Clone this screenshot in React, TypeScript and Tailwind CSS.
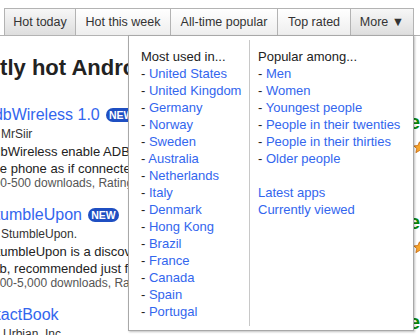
import React from 'react';

const tabs = [
  { label: 'Hot today', w: 'w-[72px]', active: true },
  { label: 'Hot this week', w: 'w-[95px]' },
  { label: 'All-time popular', w: 'w-[107px]' },
  { label: 'Top rated', w: 'w-[73px]' },
  { label: 'More ▼', w: 'w-[63px]', active: true },
];

const countries = [
  'United States', 'United Kingdom', 'Germany', 'Norway', 'Sweden', 'Australia', 'Netherlands',
  'Italy', 'Denmark', 'Hong Kong', 'Brazil', 'France', 'Canada', 'Spain', 'Portugal',
];

const groups = ['Men', 'Women', 'Youngest people', 'People in their twenties', 'People in their thirties', 'Older people'];

const apps = [
  {
    title: 'adbWireless 1.0', titleMl: 'ml-[-15px]', isNew: true,
    dev: 'MrSiir', devMl: 'ml-[1px]',
    lines: [
      { t: 'adbWireless enable ADB over WiFi to control', ml: 'ml-[-14px]' },
      { t: 'the phone as if connected by USB.', ml: 'ml-[-11px]' },
    ],
    dl: '100-500 downloads, Rating: 4.5', dlMl: 'ml-[-13px]',
  },
  {
    title: 'StumbleUpon', titleMl: 'ml-[-15px]', isNew: true,
    dev: 'StumbleUpon.', devMl: 'ml-[1px]',
    lines: [
      { t: 'StumbleUpon is a discovery engine that', ml: 'ml-[-12px]' },
      { t: 'web, recommended just for you.', ml: 'ml-[-17px]' },
    ],
    dl: '1,000-5,000 downloads, Rating: 4.2', dlMl: 'ml-[-17px]',
  },
  {
    title: 'ContactBook', titleMl: 'ml-[-33px]', isNew: false,
    dev: 'Urbian, Inc.', devMl: 'ml-[3px]',
    lines: [],
    dl: '', dlMl: '',
  },
];

function Star() {
  return (
    <svg width="13" height="13" viewBox="0 0 24 24">
      <path d="M12 1.5l3.1 6.9 7.4.7-5.6 5 1.7 7.4L12 17.6l-6.6 3.9 1.7-7.4-5.6-5 7.4-.7z" fill="#f6a52e" stroke="#c8690a" strokeWidth="1.5" strokeLinejoin="round" />
    </svg>
  );
}

export default function App() {
  return (
    <div className="relative w-[420px] h-[335px] overflow-hidden bg-white font-['Liberation_Sans',Arial,sans-serif] text-[#222]">
      {/* tab bar */}
      <div className="pt-[8px] pl-[4px] flex">
        {tabs.map((t, i) => (
          <div
            key={t.label}
            className={`${t.w} h-[27px] flex items-center justify-center border-t border-r border-[#b3b3b3] text-[12.5px] text-[#333] ${i === 0 ? 'border-l' : ''} ${
              t.active ? 'bg-gradient-to-b from-[#f7f7f7] to-[#dedede]' : 'bg-gradient-to-b from-white to-[#eeeeee]'
            }`}
          >
            {t.label}
          </div>
        ))}
      </div>
      <div className="h-px bg-[#b3b3b3]" />

      {/* page behind the menu */}
      <h1 className="mt-[19px] ml-[-72px] whitespace-nowrap text-[22px] leading-[26px] font-bold">Currently hot Android apps</h1>

      <div className="mt-[24px] flex flex-col gap-[16px]">
        {apps.map((a) => (
          <div key={a.title} className="flex items-start">
            <div className="w-[378px] shrink-0 overflow-hidden">
              <div className={`${a.titleMl} flex items-center whitespace-nowrap h-[20px]`}>
                <span className="text-[16px] leading-[20px] text-[#3366ee]">{a.title}</span>
                {a.isNew && (
                  <span className="ml-[6px] w-[31px] h-[14px] rounded-full bg-[#1f4fc2] text-white text-[10.5px] font-bold leading-[14px] text-center">NEW</span>
                )}
              </div>
              <div className={`${a.devMl} mt-[1px] text-[12px] leading-[17px] text-[#333] whitespace-nowrap`}>{a.dev}</div>
              {a.lines.map((l) => (
                <div key={l.t} className={`${l.ml} text-[13px] leading-[17px] whitespace-nowrap`}>{l.t}</div>
              ))}
              {a.dl && <div className={`${a.dlMl} text-[12px] leading-[12px] text-[#555] whitespace-nowrap`}>{a.dl}</div>}
            </div>
            <div className="mt-[4.5px] shrink-0">
              <div className="text-[20px] leading-[24px] font-bold text-[#0a860a]">Free</div>
              {a.lines.length > 0 && (
                <div className="mt-[7px] ml-[35px] flex gap-px">
                  <Star /><Star /><Star /><Star /><Star />
                </div>
              )}
            </div>
          </div>
        ))}
      </div>

      {/* More dropdown */}
      <div className="absolute left-[128px] top-[35px] w-[286px] h-[296px] bg-white border border-[#a8a8a8] shadow-[1px_1px_2px_rgba(0,0,0,0.25)] flex text-[13px] leading-[17px]">
        <div className="w-[120px] pl-[12px] pt-[12px]">
          <div>Most used in...</div>
          {countries.map((c) => (
            <div key={c} className="whitespace-nowrap">- <span className="text-[#3366ee]">{c}</span></div>
          ))}
        </div>
        <div className="my-[4px] w-px bg-[#c8c8c8]" />
        <div className="pl-[8px] pt-[12px]">
          <div>Popular among...</div>
          {groups.map((g) => (
            <div key={g} className="whitespace-nowrap">- <span className="text-[#3366ee]">{g}</span></div>
          ))}
          <div className="h-[17px]" />
          <div className="text-[#3366ee]">Latest apps</div>
          <div className="text-[#3366ee]">Currently viewed</div>
        </div>
      </div>
    </div>
  );
}
